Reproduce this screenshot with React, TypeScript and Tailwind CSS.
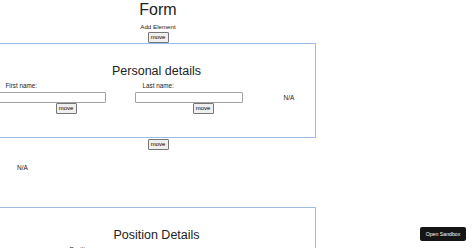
import React from "react";

function MoveButton({ className = "" }: { className?: string }) {
  return (
    <button
      className={
        "h-[11px] w-[21px] border border-[#767676] bg-[#efefef] text-[6px] leading-[9px] text-black rounded-[1px] flex items-center justify-center " +
        className
      }
    >
      move
    </button>
  );
}

function Field({ label, offset }: { label: string; offset: string }) {
  return (
    <div className={"flex flex-col w-[108px] " + offset}>
      <label className="text-[6.3px] leading-[8px] pl-[8px] text-[#222] mb-[2px]">{label}</label>
      <input className="h-[11px] w-[108px] border border-[#a3a3a3] bg-white rounded-[1px]" />
      <MoveButton className="ml-[58px]" />
    </div>
  );
}

export default function App() {
  return (
    <div className="relative w-[474px] h-[248px] overflow-hidden bg-white font-['Liberation_Sans',Arial,sans-serif] text-[#222]">
      <div className="w-[316px] flex flex-col items-center">
        <h1 className="text-[16px] leading-[18px] mt-[1px]">Form</h1>
        <div className="text-[6.2px] leading-[7px] mt-[4px]">Add Element</div>
        <MoveButton className="mt-[2px]" />
        <div className="w-[318px] -ml-[3px] h-[95px] border border-[#9dbde4] flex flex-col">
          <h2 className="text-[12.5px] leading-[15px] text-center mt-[20px]">Personal details</h2>
          <div className="flex items-center mt-[3px] -ml-[1px]">
            <Field label="First name:" offset="" />
            <Field label="Last name:" offset="ml-[29px]" />
            <div className="ml-[41px] text-[6.5px] leading-[8px]">N/A</div>
          </div>
        </div>
        <MoveButton className="mt-[1px]" />
        <div className="self-start ml-[17px] mt-[14px] text-[6.5px] leading-[8px]">N/A</div>
        <div className="w-[318px] -ml-[3px] h-[95px] mt-[35px] border border-[#9dbde4] flex flex-col">
          <h2 className="text-[12.5px] leading-[15px] text-center mt-[20px]">Position Details</h2>
          <div className="flex items-center mt-[3px] -ml-[1px]">
            <div className="ml-[72px] text-[6.3px] leading-[8px]">Position:</div>
          </div>
        </div>
      </div>
      <button className="absolute right-[8px] bottom-[7px] w-[46px] h-[14px] bg-[#151515] text-white text-[5.2px] leading-[14px] rounded-[2px] text-center">
        Open Sandbox
      </button>
    </div>
  );
}
